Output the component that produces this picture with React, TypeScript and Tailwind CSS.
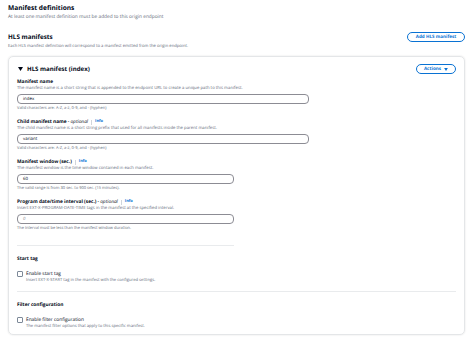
import React from "react";

const font = { fontFamily: '"Open Sans", "Noto Sans", Arial, sans-serif' };

function Info() {
  return (
    <>
      <span className="mx-[3px] inline-block h-[5px] w-px bg-[#d1d5db] align-middle" />
      <span className="text-[4px] font-bold text-[#0972d3]">Info</span>
    </>
  );
}

function Field({
  label,
  optional,
  info,
  desc,
  value,
  placeholder,
  width,
  constraint,
}: {
  label: string;
  optional?: boolean;
  info?: boolean;
  desc: string;
  value?: string;
  placeholder?: string;
  width: string;
  constraint: string;
}) {
  return (
    <div className="flex flex-col">
      <div className="flex h-[6px] items-center whitespace-nowrap text-[4.8px] leading-[6px] font-bold text-[#000716]">
        <span>{label}</span>
        {optional && <span className="ml-[1px] font-normal italic">- optional</span>}
        {info && <Info />}
      </div>
      <div className="mt-[1px] h-[5px] whitespace-nowrap text-[4.25px] leading-[5px] text-[#5f6b7a]">{desc}</div>
      <div
        className={`mt-[3px] flex h-[10px] items-center rounded-[4px] border border-[#8c8c94] px-[5px] text-[4.4px] ${width}`}
      >
        {value ? (
          <span className="text-[#000716]">{value}</span>
        ) : (
          <span className="italic text-[#8c8c94]">{placeholder}</span>
        )}
      </div>
      <div className="mt-[2px] h-[5px] whitespace-nowrap text-[4px] leading-[5px] text-[#5f6b7a]">{constraint}</div>
    </div>
  );
}

function Checkbox({ label, desc }: { label: string; desc: string }) {
  return (
    <div className="flex flex-col">
      <div className="flex h-[6px] items-center">
        <span className="inline-block h-[6px] w-[6px] rounded-[1px] border border-[#7d8998] bg-white" />
        <span className="ml-[3px] text-[4.8px] leading-[6px] text-[#000716]">{label}</span>
      </div>
      <div className="ml-[9px] mt-[1px] h-[5px] whitespace-nowrap text-[4.15px] leading-[5px] text-[#5f6b7a]">{desc}</div>
    </div>
  );
}

export default function App() {
  return (
    <div
      className="h-[339px] w-[474px] overflow-hidden bg-white px-[8px] pt-[3px] [text-rendering:geometricPrecision]"
      style={font}
    >
      <div className="h-[9px] text-[6.6px] leading-[9px] font-bold text-[#000716]">Manifest definitions</div>
      <div className="mt-[3px] h-[5px] text-[4.8px] leading-[5px] text-[#5f6b7a]">
        At least one manifest definition must be added to this origin endpoint
      </div>
      <div className="mt-[12px] flex h-[10px] items-center justify-between">
        <div className="text-[6.3px] leading-[8px] font-bold text-[#000716]">HLS manifests</div>
        <div className="mr-[1px] flex h-[10px] w-[58px] items-center justify-center rounded-full border border-[#0972d3] text-[4.6px] font-bold text-[#0972d3]">
          Add HLS manifest
        </div>
      </div>
      <div className="mt-[2px] h-[5px] text-[4.2px] leading-[5px] text-[#5f6b7a]">
        Each HLS manifest definition will correspond to a manifest emitted from the origin endpoint.
      </div>
      <div className="mt-[7px] h-[279px] w-[457px] rounded-[5px] border border-[#e4e6e8] px-[8px] pt-[7px] shadow-[0_0_2px_rgba(0,7,22,0.12)]">
        <div className="flex h-[10px] items-center justify-between">
          <div className="flex items-center">
            <svg width="5" height="4" viewBox="0 0 10 8" className="ml-[1px]">
              <path d="M0 0 L10 0 L5 8 Z" fill="#000716" />
            </svg>
            <span className="ml-[4px] text-[6.1px] font-bold text-[#000716]">HLS manifest (index)</span>
          </div>
          <div className="flex h-[10px] w-[40px] items-center justify-center rounded-full border border-[#0972d3] text-[4.6px] font-bold text-[#0972d3]">
            Actions
            <svg width="4" height="3" viewBox="0 0 10 8" className="ml-[3px]">
              <path d="M0 0 L10 0 L5 8 Z" fill="#0972d3" />
            </svg>
          </div>
        </div>
        <div className="mt-[5px] flex flex-col gap-[8px]">
          <Field
            label="Manifest name"
            desc="The manifest name is a short string that is appended to the endpoint URL to create a unique path to this manifest."
            value="index"
            width="w-[292px]"
            constraint="Valid characters are: A-Z, a-z, 0-9, and - (hyphen)"
          />
          <Field
            label="Child manifest name"
            optional
            info
            desc="The child manifest name is a short string prefix that used for all manifests inside the parent manifest."
            value="variant"
            width="w-[292px]"
            constraint="Valid characters are: A-Z, a-z, 0-9, and - (hyphen)"
          />
          <Field
            label="Manifest window (sec.)"
            info
            desc="The manifest window is the time window contained in each manifest."
            value="60"
            width="w-[217px]"
            constraint="The valid range is from 30 sec. to 900 sec. (15 minutes)."
          />
          <Field
            label="Program date/time interval (sec.)"
            optional
            info
            desc="Insert EXT-X-PROGRAM-DATE-TIME tags in the manifest at the specified interval."
            placeholder="0"
            width="w-[217px]"
            constraint="The interval must be less than the manifest window duration."
          />
        </div>
        <div className="mt-[14px] h-px w-[217px] bg-[#e9ebed]" />
        <div className="mt-[10px] h-[6px] text-[4.8px] leading-[6px] font-bold text-[#000716]">Start tag</div>
        <div className="mt-[9px]">
          <Checkbox label="Enable start tag" desc="Insert EXT-X-START tag in the manifest with the configured settings." />
        </div>
        <div className="mt-[8px] h-px w-full bg-[#e9ebed]" />
        <div className="mt-[10px] h-[6px] text-[4.8px] leading-[6px] font-bold text-[#000716]">Filter configuration</div>
        <div className="mt-[9px]">
          <Checkbox
            label="Enable filter configuration"
            desc="The manifest filter options that apply to this specific manifest."
          />
        </div>
      </div>
    </div>
  );
}
